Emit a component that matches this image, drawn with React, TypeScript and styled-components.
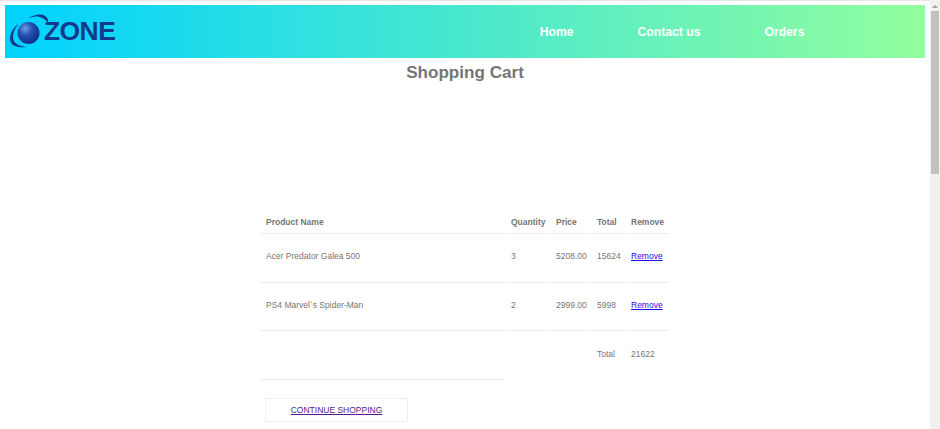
import styled, { createGlobalStyle } from "styled-components";

const GlobalStyle = createGlobalStyle`
  html, body {
    margin: 0;
    height: 100%;
    overflow: hidden;
    background: #fff;
  }
  body {
    font-family: "Liberation Sans", Arial, sans-serif;
    color: #777574;
  }
`;

const cartItems = [
  { id: 1, name: "Acer Predator Galea 500", quantity: 3, price: "5208.00", total: 15624 },
  { id: 2, name: "PS4 Marvel`s Spider-Man", quantity: 2, price: "2999.00", total: 5998 },
];

function Logo() {
  return (
    <LogoWrap>
      <svg width="40" height="40" viewBox="0 0 40 40" aria-hidden="true">
        <defs>
          <radialGradient id="ball" cx="0.35" cy="0.3" r="0.8">
            <stop offset="0" stopColor="#6f9be8" />
            <stop offset="0.4" stopColor="#2450b0" />
            <stop offset="1" stopColor="#0c2a7c" />
          </radialGradient>
        </defs>
        <circle cx="20.5" cy="21" r="11" fill="url(#ball)" />
        <path d="M11 11.5 C4 16 0 25 3 31 C6 35 12 36 18 35 C12 34 7 32 5.5 28 C4 22 7 16 11 11.5 Z" fill="#123a8c" />
        <path d="M21 6 C26 2.5 33 1.5 37 4 C40 6 41 9 41 13 C39 9 36 6 32 5 C28 4 25 5 21 6 Z" fill="#123a8c" />
      </svg>
      <LogoText>ZONE</LogoText>
    </LogoWrap>
  );
}

export default function App() {
  return (
    <>
      <GlobalStyle />
      <Page>
        <Main>
          <TopStrip />
          <Header>
            <Logo />
            <Nav>
              <NavLink href="#">Home</NavLink>
              <NavLink href="#">Contact us</NavLink>
              <NavLink href="#">Orders</NavLink>
            </Nav>
          </Header>
          <Title>Shopping Cart</Title>
          <CartSection>
            <CartTable>
              <thead>
                <tr>
                  <Th>Product Name</Th>
                  <Th>Quantity</Th>
                  <Th>Price</Th>
                  <Th>Total</Th>
                  <Th>Remove</Th>
                </tr>
              </thead>
              <tbody>
                {cartItems.map((item) => (
                  <tr key={item.id}>
                    <Td>{item.name}</Td>
                    <Td>{item.quantity}</Td>
                    <Td>{item.price}</Td>
                    <Td>{item.total}</Td>
                    <Td>
                      <RemoveLink href="#">Remove</RemoveLink>
                    </Td>
                  </tr>
                ))}
                <tr>
                  <Td />
                  <PlainTd />
                  <PlainTd />
                  <PlainTd>Total</PlainTd>
                  <PlainTd>21622</PlainTd>
                </tr>
              </tbody>
            </CartTable>
            <ContinueButton href="#">CONTINUE SHOPPING</ContinueButton>
          </CartSection>
        </Main>
        <Scrollbar>
          <ArrowUp />
          <Thumb />
        </Scrollbar>
      </Page>
    </>
  );
}

const Page = styled.div`
  display: flex;
  width: 940px;
  height: 429px;
  overflow: hidden;
`;

const Main = styled.div`
  flex: 1;
  min-width: 0;
`;

const TopStrip = styled.div`
  height: 1px;
  margin-bottom: 4.3px;
  background: #e6e6e6;
`;

const Header = styled.header`
  display: flex;
  align-items: center;
  justify-content: space-between;
  width: 920px;
  height: 52.7px;
  margin-left: 5px;
  background: linear-gradient(to right, #00d2ff, #92fe9d);
`;

const LogoWrap = styled.div`
  display: flex;
  align-items: center;
  margin-left: 3px;
`;

const LogoText = styled.span`
  margin-left: -4px;
  font-size: 26.5px;
  font-weight: 700;
  letter-spacing: -0.6px;
  color: #123a8c;
`;

const Nav = styled.nav`
  display: flex;
  gap: 64px;
  margin-right: 120.5px;
`;

const NavLink = styled.a`
  font-size: 12.2px;
  font-weight: 700;
  color: #fff;
  text-decoration: none;
`;

const Title = styled.h1`
  margin: 5px 0 0;
  font-size: 17.1px;
  line-height: 20px;
  font-weight: 700;
  text-align: center;
  color: #777574;
`;

const CartSection = styled.section`
  width: 410px;
  margin: 129px 0 0 260px;
`;

const CartTable = styled.table`
  width: 100%;
  border-collapse: separate;
  border-spacing: 1px 0;
  table-layout: fixed;
  font-size: 8.5px;
`;

const Th = styled.th`
  height: 21px;
  padding: 0 0 0 5px;
  text-align: left;
  font-weight: 700;
  border-bottom: 1px solid #ececec;
  &:nth-child(1) { width: 239px; }
  &:nth-child(2) { width: 39px; }
  &:nth-child(3) { width: 35px; }
  &:nth-child(4) { width: 28px; }
`;

const Td = styled.td`
  height: 44.7px;
  padding: 0 0 3px 5px;
  border-bottom: 1px solid #ececec;
`;

const PlainTd = styled.td`
  padding: 0 0 3px 5px;
`;

const RemoveLink = styled.a`
  color: #1a0dee;
  text-decoration: underline;
`;

const ContinueButton = styled.a`
  display: block;
  box-sizing: border-box;
  width: 143px;
  height: 24px;
  margin: 17.5px 0 0 5px;
  border: 1px solid #eeeeee;
  font-size: 8.5px;
  line-height: 22px;
  text-align: center;
  color: #551a8b;
  text-decoration: underline;
`;

const Scrollbar = styled.div`
  flex: none;
  width: 10px;
  height: 100%;
  background: #f1f1f1;
`;

const ArrowUp = styled.div`
  width: 0;
  height: 0;
  margin: 5px auto 3px;
  border-left: 3px solid transparent;
  border-right: 3px solid transparent;
  border-bottom: 3px solid #a3a3a3;
`;

const Thumb = styled.div`
  width: 8px;
  height: 163px;
  margin: 0 auto;
  background: #c1c1c1;
`;
